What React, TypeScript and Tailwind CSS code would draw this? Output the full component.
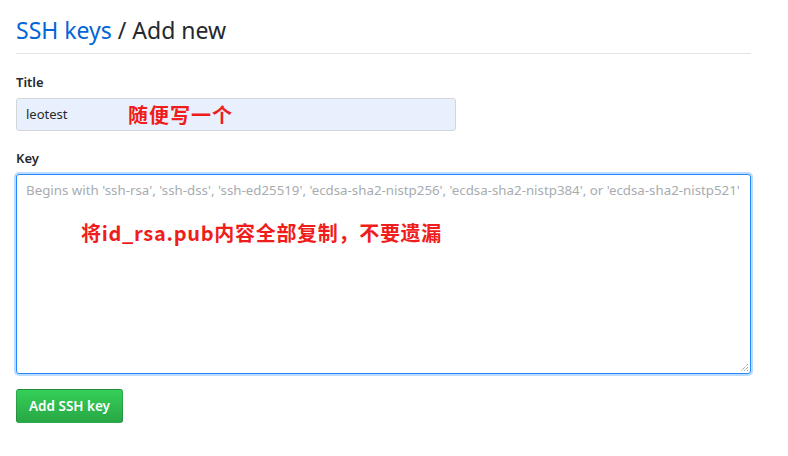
import React from "react";

export default function App() {
  const ui = { fontFamily: '"Segoe UI", "Noto Sans", "Liberation Sans", sans-serif' };
  const cjk = { fontFamily: '"Microsoft YaHei", "Noto Sans CJK SC", "Noto Sans", sans-serif' };
  return (
    <div className="w-[788px] h-[456px] bg-white text-[#24292e]" style={ui}>
      <div className="ml-4 w-[735px] pt-[15px]">
        <div className="pb-2 border-b border-[#e1e4e8] text-[23px] leading-[30px] font-normal">
          <span className="text-[#0366d6]">SSH keys</span>
          <span> / Add new</span>
        </div>
        <div className="mt-[18px] text-[13px] leading-5 font-semibold">Title</div>
        <div className="relative mt-[6px] w-[440px]">
          <div className="h-[33px] bg-[#e8f0fe] border border-[#d1d5da] rounded-[3px] pl-[9px] flex items-center text-[13px]">
            leotest
          </div>
          <span
            className="absolute left-[112px] top-[6px] text-[20px] leading-[22px] font-bold text-[#f01d1d] tracking-[1px]"
            style={cjk}
          >
            随便写一个
          </span>
        </div>
        <div className="mt-[17px] text-[13px] leading-5 font-semibold">Key</div>
        <div className="relative mt-[6px]">
          <div className="h-[200px] border border-[#2188ff] rounded-[3px] shadow-[0_0_0_2px_rgba(33,136,255,0.3)] px-[9px] pt-[5px] text-[13.3px] leading-5 text-[#a8acb0] whitespace-nowrap overflow-hidden">
            Begins with 'ssh-rsa', 'ssh-dss', 'ssh-ed25519', 'ecdsa-sha2-nistp256', 'ecdsa-sha2-nistp384', or 'ecdsa-sha2-nistp521'
          </div>
          <span
            className="absolute left-[65px] top-[47px] text-[20px] leading-[24px] font-bold text-[#f01d1d] tracking-[0.7px]"
            style={cjk}
          >
            将id_rsa.pub内容全部复制，不要遗漏
          </span>
          <svg className="absolute right-[2px] bottom-[2px]" width="10" height="10" viewBox="0 0 10 10">
            <path d="M9 2 L2 9 M9 5 L5 9 M9 8 L8 9" stroke="#777" strokeWidth="1" strokeDasharray="1 1" />
          </svg>
        </div>
        <button
          className="mt-[15px] h-[34px] w-[107px] rounded-[3px] border border-[rgba(27,31,35,0.2)] bg-gradient-to-b from-[#34d058] to-[#28a745] text-white text-[13.5px] font-semibold"
          style={ui}
        >
          Add SSH key
        </button>
      </div>
    </div>
  );
}
